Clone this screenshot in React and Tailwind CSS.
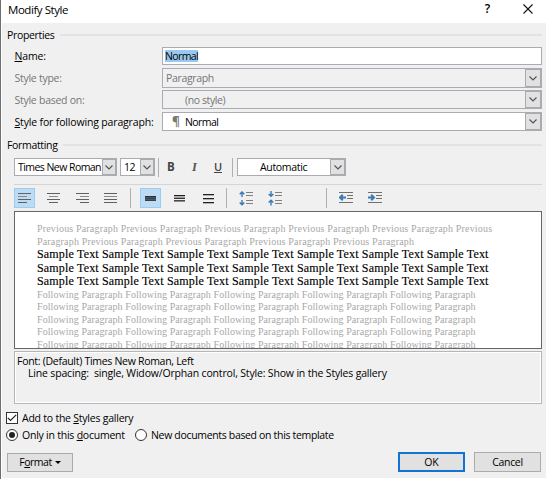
import React, { useState } from 'react';

const SAMPLE_LINE = Array(7).fill('Sample Text').join(' ');
const FOLLOWING_LINE = Array(5).fill('Following Paragraph').join(' ');
const PREVIOUS_LINES = [
  'Previous Paragraph Previous Paragraph Previous Paragraph Previous Paragraph Previous Paragraph Previous',
  'Paragraph Previous Paragraph Previous Paragraph Previous Paragraph Previous Paragraph',
];

// x start / x end of every row in the alignment icons
const ALIGN_ROWS = {
  left: [[0, 13], [0, 9], [0, 13], [0, 9]],
  center: [[0, 13], [2, 11], [0, 13], [2, 11]],
  right: [[0, 13], [4, 13], [0, 13], [4, 13]],
  justify: [[0, 13], [0, 13], [0, 13], [0, 13]],
};

function AlignIcon({ type }) {
  return (
    <svg width="13" height="11" viewBox="0 0 13 11" shapeRendering="crispEdges">
      {ALIGN_ROWS[type].map(([a, b], i) => (
        <rect key={i} x={a} y={i * 3} width={b - a} height="1" fill={i === 1 ? '#8a8a8a' : '#606060'} />
      ))}
    </svg>
  );
}

function SpacingIcon({ rows, color = '#222' }) {
  return (
    <svg width="11" height="11" viewBox="0 0 11 11">
      {rows.map((y) => (
        <rect key={y} x="0" y={y} width="11" height="1.3" fill={color} />
      ))}
    </svg>
  );
}

function ParagraphGapIcon({ inward }) {
  return (
    <svg width="15" height="15" viewBox="0 0 15 15" fill="none">
      <path d="M7 1.5h7M7 4.5h7M7 9.5h7M7 12.5h7" stroke="#808080" />
      {inward ? (
        <path d="M3 0v5M.7 3 3 5.3 5.3 3M3 14.5V9.5M.7 11.5 3 9.2l2.3 2.3" stroke="#3b78b5" strokeWidth="1.4" />
      ) : (
        <path d="M3 6V1M.7 3.3 3 1l2.3 2.3M3 9v5M.7 11.5 3 13.8l2.3-2.3" stroke="#3b78b5" strokeWidth="1.4" />
      )}
    </svg>
  );
}

function IndentIcon({ increase }) {
  return (
    <svg width="15" height="12" viewBox="0 0 15 12" fill="none">
      <path d="M0 .5h14M8 3.5h6M8 6.5h6M0 10.5h14" stroke="#707070" />
      {increase ? (
        <path d="M0 5.5h6M3.2 2.7 6 5.5 3.2 8.3" stroke="#3b78b5" strokeWidth="2" />
      ) : (
        <path d="M7 5.5H1M3.8 2.7 1 5.5l2.8 2.8" stroke="#3b78b5" strokeWidth="2" />
      )}
    </svg>
  );
}

function Arrow({ className }) {
  return (
    <span className={`flex shrink-0 items-center justify-center border border-[#ababab] bg-[#e1e1e1] ${className}`}>
      <svg width="8" height="5" viewBox="0 0 8 5" fill="none">
        <path d="M.5.5 4 4 7.5.5" stroke="#555" strokeWidth="1.2" />
      </svg>
    </span>
  );
}

function Divider({ className }) {
  return <span className={`w-px shrink-0 bg-[#b0b0b0] ${className}`} />;
}

function SectionTitle({ children }) {
  return (
    <div className="flex h-[14px] items-center gap-[5px] pl-[5px] pr-[4px]">
      <span className="tracking-[-0.33px] text-black">{children}</span>
      <span className="h-[2px] flex-1 bg-[#e3e3e3]" />
    </div>
  );
}

function Field({ label, disabled, children, className }) {
  return (
    <div className={`flex items-center pl-[12.5px] pr-[4px] ${disabled ? 'text-[#757575]' : 'text-black'} ${className}`}>
      <span className={`w-[147.5px] shrink-0 ${disabled ? 'tracking-[-0.26px]' : ''}`}>{label}</span>
      {children}
    </div>
  );
}

function ToolButton({ active, children, className }) {
  return (
    <button
      type="button"
      className={`flex h-[20px] w-[21px] shrink-0 items-center justify-center border ${active ? 'border-[#98cdf5] bg-[#bddcf4]' : 'border-transparent'} ${className}`}
    >
      {children}
    </button>
  );
}

function Radio({ checked, onClick, label, className }) {
  return (
    <button type="button" onClick={onClick} className={`flex items-center ${className}`}>
      <span className="mr-[4px] flex h-[12px] w-[12px] shrink-0 items-center justify-center rounded-full border border-[#333] bg-white">
        {checked && <span className="h-[6px] w-[6px] rounded-full bg-[#222]" />}
      </span>
      {label}
    </button>
  );
}

function App() {
  const [inGallery, setInGallery] = useState(true);
  const [scope, setScope] = useState('document');

  return (
    <div className="h-[479px] w-[547px] overflow-hidden border-l border-[#6e6e6e] bg-white font-['Open_Sans',sans-serif] text-[10.5px] leading-[12px] tracking-[-0.16px] whitespace-nowrap text-black">
      <div className="flex h-[23px] items-center pl-[7px] pr-[14px]">
        <span className="-mt-[4px] text-[11.5px] tracking-[-0.45px]">Modify Style</span>
        <span className="-mt-[6px] ml-auto mr-[33px] text-[12px] font-semibold">?</span>
        <svg className="-mt-[6px]" width="10" height="10" viewBox="0 0 10 10">
          <path d="M.5.5l9 9M9.5.5l-9 9" stroke="#111" strokeWidth="1.1" />
        </svg>
      </div>

      <div className="ml-px h-[455px] w-[544px] bg-[#f0f0f0] pt-[5px]">
        <SectionTitle>Properties</SectionTitle>

        <Field className="mt-[5px] h-[18px]" label={<><u>N</u>ame:</>}>
          <div className="flex h-full flex-1 items-center border border-[#ababb5] bg-white pl-[2px]">
            <span className="bg-[#99c9ef] tracking-[-0.6px]">Normal</span>
          </div>
        </Field>
        <Field disabled className="mt-[3px] h-[20px]" label="Style type:">
          <div className="flex h-full flex-1 items-center border border-[#ababb5] pl-[3px]">
            <span className="tracking-[-0.35px]">Paragraph</span>
            <Arrow className="ml-auto h-full w-[16px]" />
          </div>
        </Field>
        <Field disabled className="mt-[2px] h-[19px]" label="Style based on:">
          <div className="flex h-full flex-1 items-center border border-[#ababb5] pl-[22px]">
            <span className="tracking-[-0.4px]">(no style)</span>
            <Arrow className="ml-auto h-full w-[16px]" />
          </div>
        </Field>
        <Field className="mt-[3px] h-[19px]" label={<><u>S</u>tyle for following paragraph:</>}>
          <div className="flex h-full flex-1 items-center border border-[#ababb5] bg-white pl-[9px]">
            <span className="w-[13px] text-[12px] font-bold text-[#777]">¶</span>
            <span className="tracking-[-0.55px]">Normal</span>
            <Arrow className="ml-auto h-full w-[16px]" />
          </div>
        </Field>

        <div className="mt-[7px]">
          <SectionTitle>Formatting</SectionTitle>
        </div>

        <div className="mt-[6px] flex h-[18px] items-center pl-[12px]">
          <div className="flex h-full w-[103px] items-center border border-[#ababb5] bg-white pl-[3px]">
            <span className="tracking-[-0.55px]">Times New Roman</span>
            <Arrow className="ml-auto h-full w-[14px]" />
          </div>
          <div className="ml-[3px] flex h-full w-[35px] items-center border border-[#ababb5] bg-white pl-[3px]">
            <span className="tracking-[-0.5px]">12</span>
            <Arrow className="ml-auto h-full w-[14px]" />
          </div>
          <Divider className="ml-[3px] h-[19px]" />
          <span className="ml-[8px] w-[25px] text-[11.5px] font-bold text-[#444]">B</span>
          <span className="w-[22px] font-['Liberation_Serif',serif] text-[12.5px] font-bold italic text-[#555]">I</span>
          <span className="w-[18px] text-[11px] font-semibold text-[#444] underline">U</span>
          <Divider className="h-[19px]" />
          <div className="ml-[4px] flex h-full w-[109px] items-center border border-[#ababb5] bg-white pl-[22px]">
            <span className="tracking-[-0.33px]">Automatic</span>
            <Arrow className="ml-auto h-full w-[15px]" />
          </div>
        </div>

        <div className="ml-[12px] mr-[4px] mt-[8px] h-px bg-[#d5d5d5]" />

        <div className="mt-[3px] flex h-[20px] items-center pl-[12px]">
          <ToolButton active><AlignIcon type="left" /></ToolButton>
          <ToolButton className="ml-[8px]"><AlignIcon type="center" /></ToolButton>
          <ToolButton className="ml-[8px]"><AlignIcon type="right" /></ToolButton>
          <ToolButton className="ml-[7px]"><AlignIcon type="justify" /></ToolButton>
          <Divider className="ml-[9px] h-[20px]" />
          <ToolButton active className="ml-[9px]"><SpacingIcon rows={[3, 4.3, 5.3, 6.6]} color="#25323d" /></ToolButton>
          <ToolButton className="ml-[8px]"><SpacingIcon rows={[2, 4.6, 7.2]} /></ToolButton>
          <ToolButton className="ml-[8px]"><SpacingIcon rows={[1, 5, 9]} /></ToolButton>
          <Divider className="ml-[7px] h-[20px]" />
          <ToolButton className="ml-[9px]"><ParagraphGapIcon /></ToolButton>
          <ToolButton className="ml-[8px]"><ParagraphGapIcon inward /></ToolButton>
          <Divider className="ml-[40px] h-[20px]" />
          <ToolButton className="ml-[9px]"><IndentIcon /></ToolButton>
          <ToolButton className="ml-[8px]"><IndentIcon increase /></ToolButton>
        </div>

        <div className="ml-[12px] mt-[3px] h-[138px] w-[528px] overflow-hidden border border-[#666] bg-white pl-[22px] pt-[11px] font-['Liberation_Serif',serif] text-[10px] leading-[12.6px] tracking-[0.08px] text-[#a8a8a8]">
          <div className="tracking-[0.17px]">
            {PREVIOUS_LINES.map((line) => (
              <p key={line}>{line}</p>
            ))}
          </div>
          <div className="text-[12px] leading-[13.5px] tracking-[0.17px] text-black [-webkit-text-stroke:0.15px_black]">
            {[0, 1, 2].map((n) => (
              <p key={n}>{SAMPLE_LINE}</p>
            ))}
          </div>
          {[0, 1, 2, 3, 4].map((n) => (
            <p key={n}>{FOLLOWING_LINE}</p>
          ))}
        </div>

        <div className="ml-[12px] mt-[2px] h-[53px] w-[528px] border border-[#b5b5bd] pl-[2px] pt-[3px] outline-1 -outline-offset-2 outline-white">
          <p className="tracking-[-0.29px]">Font: (Default) Times New Roman, Left</p>
          <p className="pl-[11px] tracking-[-0.17px]">Line spacing:&nbsp; single, Widow/Orphan control, Style: Show in the Styles gallery</p>
        </div>

        <button type="button" onClick={() => setInGallery(!inGallery)} className="ml-[4px] mt-[8px] flex h-[12px] items-center">
          <span className="mr-[4px] flex h-[12px] w-[12px] shrink-0 items-center justify-center border border-[#333] bg-white">
            {inGallery && (
              <svg width="10" height="8" viewBox="0 0 10 8" fill="none">
                <path d="M.8 3.8 3.5 6.5 9.2.8" stroke="#222" strokeWidth="1.2" />
              </svg>
            )}
          </span>
          <span className="tracking-[-0.23px]">Add to the <u>S</u>tyles gallery</span>
        </button>

        <div className="mt-[5px] flex h-[12px] items-center pl-[4px]">
          <Radio
            className="w-[129px]"
            checked={scope === 'document'}
            onClick={() => setScope('document')}
            label={<span className="tracking-[-0.23px]">Only in this <u>d</u>ocument</span>}
          />
          <Radio
            checked={scope === 'template'}
            onClick={() => setScope('template')}
            label={<span className="tracking-[-0.33px]">New documents based on this template</span>}
          />
        </div>

        <div className="mt-[11px] flex h-[20px] items-center pl-[5px] pr-[5px]">
          <button type="button" className="flex h-[19px] w-[66px] items-center justify-center gap-[3px] border border-[#ababab] bg-[#e1e1e1]">
            <span className="tracking-[-0.5px]">F<u>o</u>rmat</span>
            <span className="border-x-[3px] border-t-[3px] border-x-transparent border-t-black" />
          </button>
          <button type="button" className="ml-auto h-[20px] w-[67px] border-2 border-[#0f74d4] bg-[#e1e1e1]">OK</button>
          <button type="button" className="ml-[9px] h-[20px] w-[67px] border border-[#ababab] bg-[#e1e1e1] tracking-[-0.33px]">Cancel</button>
        </div>
      </div>
    </div>
  );
}

export default App;
